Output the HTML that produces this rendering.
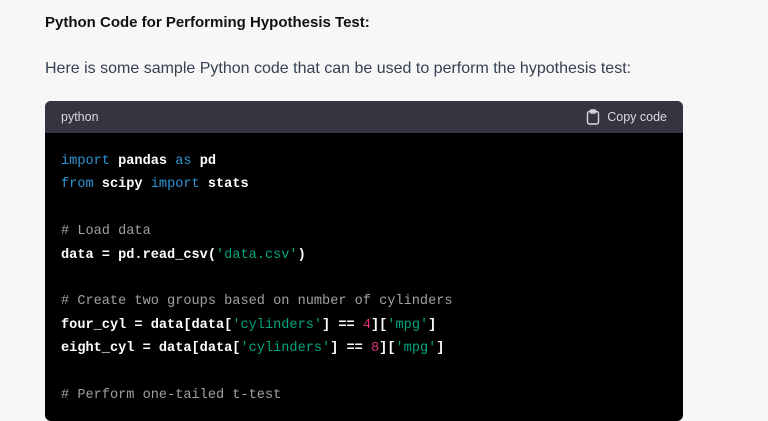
<!DOCTYPE html>
<html><head><style>
body{margin:0;background:#f7f7f8;width:768px;height:403px;overflow:hidden;font-family:"Liberation Sans",sans-serif;color:#374151}
.t{position:absolute;left:45px;top:14px;font-weight:bold;font-size:15px;color:#111}
.p{position:absolute;left:45px;top:60px;font-size:16px;color:#374151}
.cb{position:absolute;left:45px;top:101px;width:638px;height:320px;border-radius:6px;overflow:hidden;background:#000}
.hd{height:32px;background:#343541;color:#d9d9e3;font-size:12.5px;display:flex;align-items:center;justify-content:space-between;padding:0 16px}
pre{margin:0;padding:17px 16px;font-family:"Liberation Mono",monospace;font-size:13.6px;line-height:23.4px;color:#fff;font-weight:bold}
.k{color:#2e95d3;font-weight:normal}.c{color:#a0a0a0;font-weight:normal}.s{color:#00a67d;font-weight:normal}.n{color:#df3079;font-weight:normal}
</style></head><body>
<div class="t">Python Code for Performing Hypothesis Test:</div>
<div class="p">Here is some sample Python code that can be used to perform the hypothesis test:</div>
<div class="cb">
<div class="hd"><span>python</span><span style="display:flex;align-items:center;gap:7px"><svg width="14" height="16" viewBox="0 0 14 16" fill="none" stroke="#d9d9e3" stroke-width="1.4"><rect x="1.5" y="2.5" width="11" height="12.5" rx="2"/><rect x="4.5" y="1" width="5" height="3" rx="1"/></svg>Copy code</span></div>
<pre><span class="k">import</span> pandas <span class="k">as</span> pd
<span class="k">from</span> scipy <span class="k">import</span> stats

<span class="c"># Load data</span>
data = pd.read_csv(<span class="s">'data.csv'</span>)

<span class="c"># Create two groups based on number of cylinders</span>
four_cyl = data[data[<span class="s">'cylinders'</span>] == <span class="n">4</span>][<span class="s">'mpg'</span>]
eight_cyl = data[data[<span class="s">'cylinders'</span>] == <span class="n">8</span>][<span class="s">'mpg'</span>]

<span class="c"># Perform one-tailed t-test</span></pre>
</div>
</body></html>
